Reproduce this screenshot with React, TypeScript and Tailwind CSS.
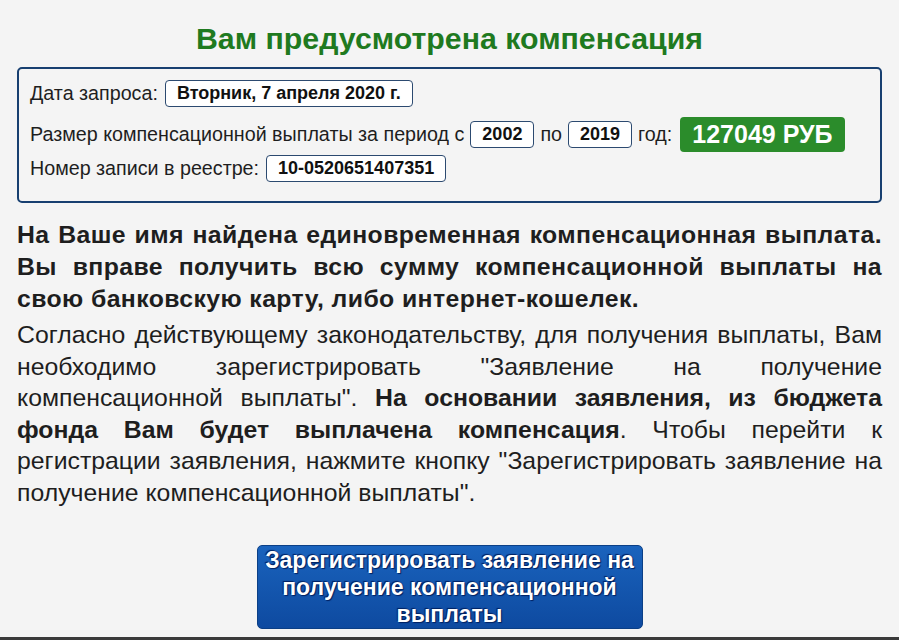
export default function App() {
  const field =
    'inline-block rounded-[4px] border border-[#2c4a70] bg-white px-[11px] text-[18px] leading-[25px] font-bold text-[#111]';

  return (
    <div className="flex h-[640px] flex-col overflow-hidden border-b-[3px] border-[#3a3a3a] bg-[#f4f4f4] font-['Liberation_Sans',Arial,sans-serif] text-[#1e1e1e]">
      <div className="flex flex-col px-[17px] pt-[22px]">
        {/* heading */}
        <h1 className="m-0 text-center text-[30.3px] leading-[34px] font-bold text-[#1f7a1f]">
          Вам предусмотрена компенсация
        </h1>

        {/* request details */}
        <div className="mt-[11px] flex h-[136px] flex-col rounded-[5px] border-2 border-[#173f70] px-[11px] pt-[11px] text-[19.7px]">
          <div className="flex h-[27px] items-center gap-[7px]">
            <span>Дата запроса:</span>
            <span className={field}>Вторник, 7 апреля 2020 г.</span>
          </div>
          <div className="mt-[10px] flex h-[35px] items-center gap-[6px]">
            <span>Размер компенсационной выплаты за период с</span>
            <span className={field}>2002</span>
            <span>по</span>
            <span className={field}>2019</span>
            <span>год:</span>
            <span className="ml-[2px] rounded-[4px] bg-[#2b8c2b] px-[12px] text-[25px] leading-[35px] font-bold text-white">
              127049 РУБ
            </span>
          </div>
          <div className="mt-[3px] flex h-[27px] items-center gap-[7px]">
            <span>Номер записи в реестре:</span>
            <span className={field}>10-0520651407351</span>
          </div>
        </div>

        {/* message */}
        <p className="m-0 mt-[16px] text-justify text-[24.8px] leading-[32px] font-bold tracking-[0.4px]">
          На Ваше имя найдена единовременная компенсационная выплата. Вы вправе получить всю сумму
          компенсационной выплаты на свою банковскую карту, либо интернет-кошелек.
        </p>
        <p className="m-0 mt-[4px] text-justify text-[24.8px] leading-[31.6px]">
          Согласно действующему законодательству, для получения выплаты, Вам необходимо
          зарегистрировать "Заявление на получение компенсационной выплаты".{' '}
          <b>На основании заявления, из бюджета фонда Вам будет выплачена компенсация</b>. Чтобы
          перейти к регистрации заявления, нажмите кнопку "Зарегистрировать заявление на получение
          компенсационной выплаты".
        </p>

        {/* action */}
        <div className="mt-[36px] flex justify-center">
          <button
            type="button"
            className="w-[386px] rounded-[5px] border border-[#0b3f86] bg-gradient-to-b from-[#1a63bd] to-[#0e4aa0] px-1 pt-[1px] text-[23px] leading-[27px] font-bold text-white [text-shadow:1px_1px_1px_#002060,-1px_-1px_1px_#002060]"
          >
            Зарегистрировать заявление на получение компенсационной выплаты
          </button>
        </div>
      </div>
    </div>
  );
}
